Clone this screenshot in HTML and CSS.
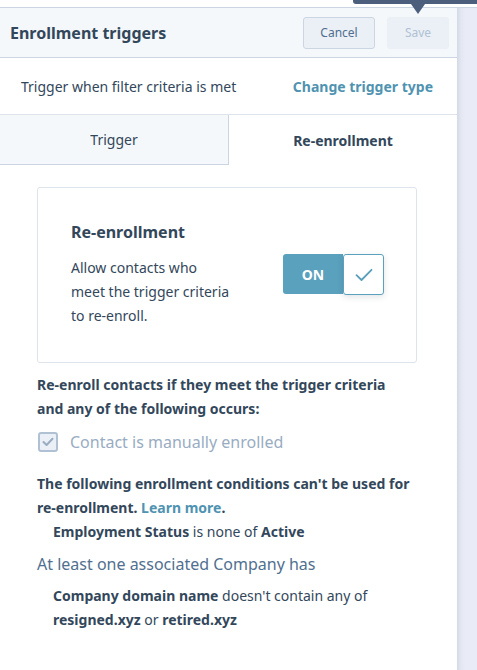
FILE: index.html
```html
<!DOCTYPE html>
<html>
<head>
<meta charset="utf-8">
<link rel="stylesheet" href="styles.css">
</head>
<body>
<div class="topbar"></div>
<div class="tooltip"><span class="caret"></span></div>
<div class="layout">
  <div class="panel">
    <header class="header">
      <h1 class="title">Enrollment triggers</h1>
      <div class="actions">
        <button class="btn btn-cancel">Cancel</button>
        <button class="btn btn-save">Save</button>
      </div>
    </header>
    <div class="type-row">
      <span>Trigger when filter criteria is met</span>
      <a class="link-strong">Change trigger type</a>
    </div>
    <div class="tabs">
      <div class="tab">Trigger</div>
      <div class="tab tab-active">Re-enrollment</div>
    </div>
    <div class="content">
      <div class="card">
        <h2 class="card-title">Re-enrollment</h2>
        <div class="card-row">
          <p class="card-text">Allow contacts who meet the trigger criteria to re-enroll.</p>
          <div class="toggle">
            <span class="toggle-on">ON</span>
            <span class="toggle-knob">
              <svg width="18" height="14" viewBox="0 0 18 14"><path d="M1.5 7.2 L6.5 12 L16.5 1.8" fill="none" stroke="#5a9fbb" stroke-width="1.8" stroke-linecap="round" stroke-linejoin="round"/></svg>
            </span>
          </div>
        </div>
      </div>
      <p class="bold-text mt narrow">Re-enroll contacts if they meet the trigger criteria and any of the following occurs:</p>
      <label class="check-row">
        <span class="checkbox">
          <svg width="12" height="10" viewBox="0 0 12 10"><path d="M1.5 5 L4.6 8 L10.5 1.8" fill="none" stroke="#99acc2" stroke-width="2" stroke-linecap="round" stroke-linejoin="round"/></svg>
        </span>
        <span class="check-label">Contact is manually enrolled</span>
      </label>
      <p class="bold-text mt2">The following enrollment conditions can't be used for re-enrollment. <a class="link-strong">Learn more</a>.</p>
      <p class="cond"><b>Employment Status</b> is none of <b>Active</b></p>
      <p class="assoc">At least one associated Company has</p>
      <p class="cond"><b>Company domain name</b> doesn't contain any of <b>resigned.xyz</b> or <b>retired.xyz</b></p>
    </div>
  </div>
  <div class="side"></div>
</div>
</body>
</html>
```
FILE: styles.css
```css
* { box-sizing: border-box; }
html, body { margin: 0; padding: 0; }
body {
  width: 477px;
  height: 670px;
  overflow: hidden;
  background: #fff;
  font-family: "Noto Sans", "Open Sans", sans-serif;
  color: #33475b;
  font-size: 14px;
  position: relative;
}
.topbar { height: 7px; background: #fff; }
.tooltip {
  position: absolute;
  left: 353px;
  top: 0;
  width: 140px;
  height: 4px;
  background: #4b5e7c;
  border-radius: 0 0 0 3px;
}
.caret {
  position: absolute;
  left: 58px;
  top: 4px;
  width: 0;
  height: 0;
  border-left: 7px solid transparent;
  border-right: 7px solid transparent;
  border-top: 10px solid #4b5e7c;
}
.layout {
  display: flex;
  height: 663px;
  border-top: 1px solid #cbd6e2;
}
.panel {
  width: 457px;
  flex: none;
  background: #fff;
  display: flex;
  flex-direction: column;
}
.side {
  flex: 1;
  background: linear-gradient(to right, #d3d9e6 0, #e3e7f1 4px, #e9ecf6 8px);
}
.header {
  height: 50px;
  background: #f5f8fa;
  border-bottom: 1px solid #cbd6e2;
  display: flex;
  align-items: center;
  justify-content: space-between;
  padding: 0 8px 0 10px;
}
.title {
  margin: 0;
  font-size: 16px;
  font-weight: 700;
  color: #33475b;
}
.actions { display: flex; gap: 12px; }
.btn {
  font-family: inherit;
  font-size: 12px;
  height: 32px;
  border-radius: 3px;
  padding: 0;
}
.btn-cancel {
  width: 72px;
  background: #eaf0f6;
  border: 1px solid #cbd6e2;
  color: #506e8f;
}
.btn-save {
  width: 62px;
  background: #eaf0f6;
  border: 1px solid #eaf0f6;
  color: #b0c1d4;
}
.type-row {
  height: 57px;
  border-bottom: 1px solid #dfe3eb;
  display: flex;
  align-items: center;
  justify-content: space-between;
  padding: 0 24px 0 21px;
  font-size: 14px;
}
.link-strong {
  color: #4f93b1;
  font-weight: 700;
}
.tabs {
  display: flex;
  height: 50px;
}
.tab {
  flex: 1;
  display: flex;
  align-items: center;
  justify-content: center;
  font-size: 14px;
  background: #f5f8fa;
  border-right: 1px solid #cbd6e2;
  border-bottom: 1px solid #cbd6e2;
}
.tab-active {
  background: #fff;
  border: none;
  font-weight: 700;
}
.content {
  padding: 22px 40px 0 37px;
}
.card {
  border: 1px solid #dfe3eb;
  border-radius: 3px;
  height: 176px;
  padding: 33px 32px 0 33px;
}
.card-title {
  margin: 0 0 13px;
  font-size: 16px;
  font-weight: 700;
}
.card-row {
  display: flex;
  justify-content: space-between;
  align-items: flex-start;
}
.card-text {
  margin: 0;
  width: 162px;
  line-height: 24px;
}
.toggle {
  display: flex;
  margin-top: -2px;
}
.toggle-on {
  width: 60px;
  height: 40px;
  background: #5aa1bd;
  color: #fff;
  font-weight: 700;
  font-size: 14px;
  display: flex;
  align-items: center;
  justify-content: center;
  border-radius: 3px 0 0 3px;
}
.toggle-knob {
  width: 41px;
  height: 41px;
  background: #fff;
  border: 1px solid #5aa1bd;
  border-radius: 3px;
  display: flex;
  align-items: center;
  justify-content: center;
  box-shadow: 0 2px 6px rgba(45, 62, 80, 0.15);
}
.bold-text {
  margin: 0;
  font-weight: 700;
  line-height: 24px;
}
.narrow { max-width: 350px; }
.mt { margin-top: 10px; }
.mt2 { margin-top: 19px; }
.check-row {
  display: flex;
  align-items: center;
  gap: 12px;
  margin-top: 10px;
}
.checkbox {
  width: 20px;
  height: 20px;
  border: 2px solid #b0c1d4;
  border-radius: 3px;
  background: #eaf0f6;
  display: flex;
  align-items: center;
  justify-content: center;
  margin-left: 1px;
}
.check-label {
  font-size: 16px;
  color: #99acc2;
}
.cond {
  margin: 0;
  padding-left: 16px;
  line-height: 24px;
}
.cond b { font-weight: 700; }
.assoc {
  margin: 8px 0 8px;
  font-size: 16px;
  color: #516f90;
  line-height: 24px;
}
```
